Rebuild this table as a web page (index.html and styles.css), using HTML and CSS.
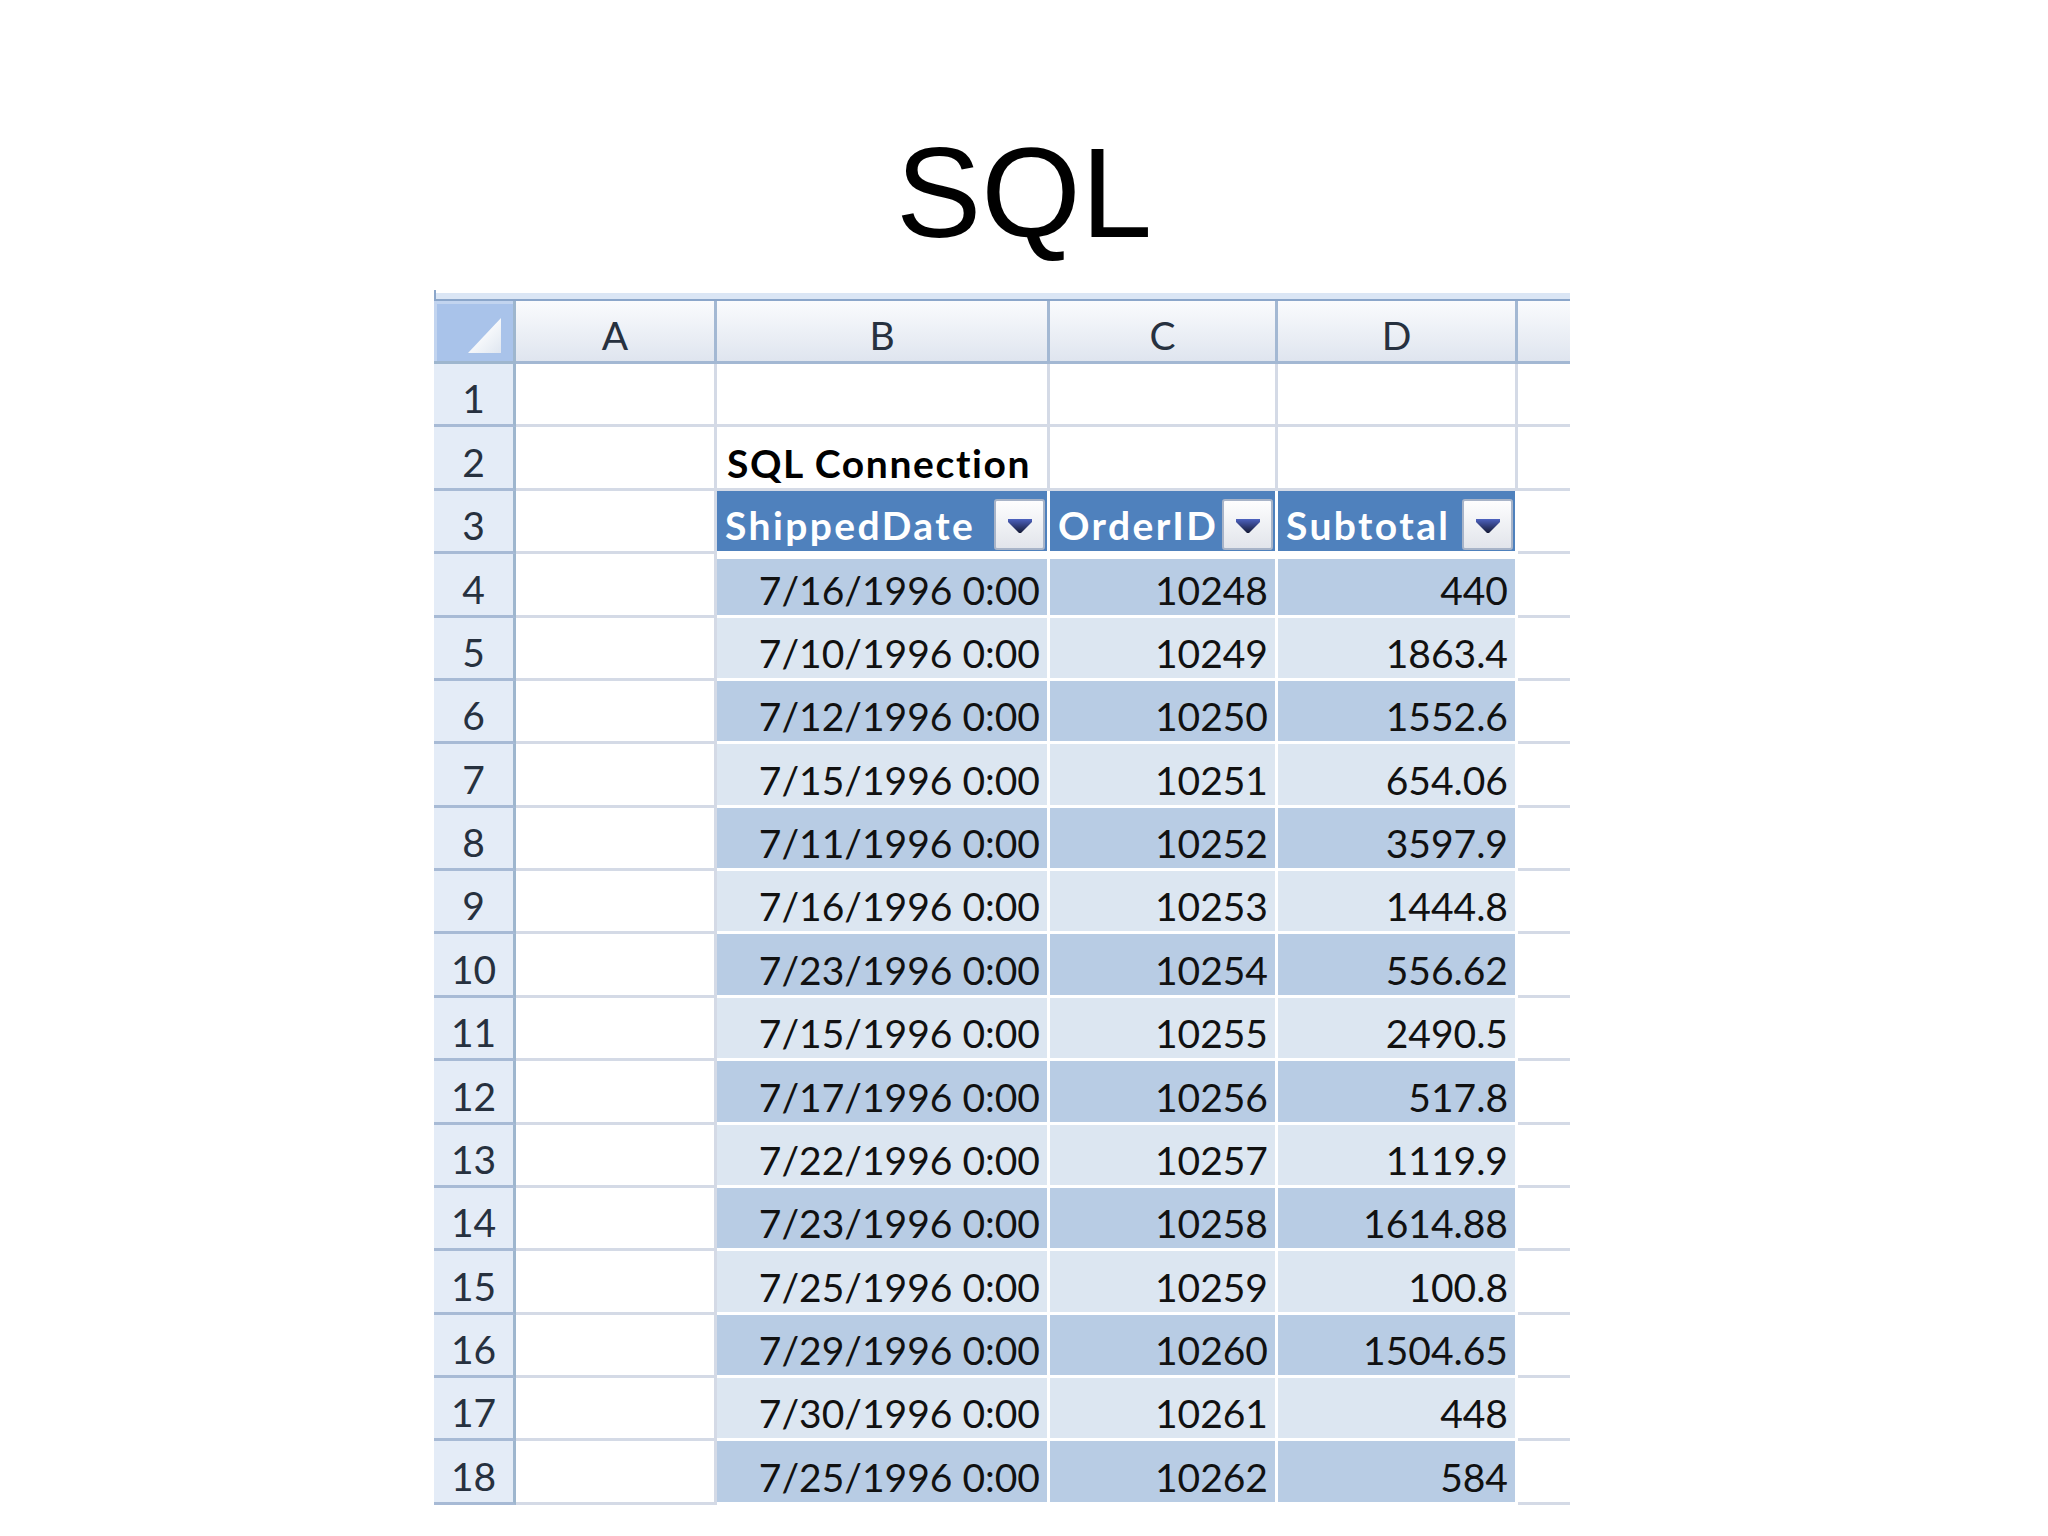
FILE: index.html
```html
<!DOCTYPE html>
<html>
<head>
<meta charset="utf-8">
<title>SQL</title>
<link rel="stylesheet" href="styles.css">
</head>
<body>
<h1 class="title">SQL</h1>
<div class="sheet">
  <div class="tick"></div>
  <div class="topband"></div>
  <div class="grid">
    <div class="corner"><div class="tri"></div></div>
    <div class="hd">A</div><div class="hd">B</div><div class="hd">C</div><div class="hd">D</div><div class="hd last"></div>

    <div class="rh">1</div><div class="c"></div><div class="c"></div><div class="c"></div><div class="c"></div><div class="c last"></div>
    <div class="rh">2</div><div class="c"></div><div class="c title-cell">SQL Connection</div><div class="c"></div><div class="c"></div><div class="c last"></div>
    <div class="rh">3</div><div class="c"></div>
    <div class="th"><span class="th-label">ShippedDate</span><span class="dd"><svg width="24" height="14" viewBox="0 0 24 14"><defs><linearGradient id="g1" x1="0" y1="0" x2="0" y2="1"><stop offset="0" stop-color="#4d62c0"/><stop offset="1" stop-color="#151a36"/></linearGradient></defs><path d="M0 0H24V3L13 14H11L0 3Z" fill="url(#g1)"/></svg></span></div>
    <div class="th"><span class="th-label">OrderID</span><span class="dd"><svg width="24" height="14" viewBox="0 0 24 14"><path d="M0 0H24V3L13 14H11L0 3Z" fill="url(#g1)"/></svg></span></div>
    <div class="th"><span class="th-label">Subtotal</span><span class="dd"><svg width="24" height="14" viewBox="0 0 24 14"><path d="M0 0H24V3L13 14H11L0 3Z" fill="url(#g1)"/></svg></span></div>
    <div class="c last"></div>

    <div class="rh">4</div><div class="c"></div><div class="td odd first">7/16/1996 0:00</div><div class="td odd first">10248</div><div class="td odd first">440</div><div class="c last"></div>
    <div class="rh">5</div><div class="c"></div><div class="td even">7/10/1996 0:00</div><div class="td even">10249</div><div class="td even">1863.4</div><div class="c last"></div>
    <div class="rh">6</div><div class="c"></div><div class="td odd">7/12/1996 0:00</div><div class="td odd">10250</div><div class="td odd">1552.6</div><div class="c last"></div>
    <div class="rh">7</div><div class="c"></div><div class="td even">7/15/1996 0:00</div><div class="td even">10251</div><div class="td even">654.06</div><div class="c last"></div>
    <div class="rh">8</div><div class="c"></div><div class="td odd">7/11/1996 0:00</div><div class="td odd">10252</div><div class="td odd">3597.9</div><div class="c last"></div>
    <div class="rh">9</div><div class="c"></div><div class="td even">7/16/1996 0:00</div><div class="td even">10253</div><div class="td even">1444.8</div><div class="c last"></div>
    <div class="rh">10</div><div class="c"></div><div class="td odd">7/23/1996 0:00</div><div class="td odd">10254</div><div class="td odd">556.62</div><div class="c last"></div>
    <div class="rh">11</div><div class="c"></div><div class="td even">7/15/1996 0:00</div><div class="td even">10255</div><div class="td even">2490.5</div><div class="c last"></div>
    <div class="rh">12</div><div class="c"></div><div class="td odd">7/17/1996 0:00</div><div class="td odd">10256</div><div class="td odd">517.8</div><div class="c last"></div>
    <div class="rh">13</div><div class="c"></div><div class="td even">7/22/1996 0:00</div><div class="td even">10257</div><div class="td even">1119.9</div><div class="c last"></div>
    <div class="rh">14</div><div class="c"></div><div class="td odd">7/23/1996 0:00</div><div class="td odd">10258</div><div class="td odd">1614.88</div><div class="c last"></div>
    <div class="rh">15</div><div class="c"></div><div class="td even">7/25/1996 0:00</div><div class="td even">10259</div><div class="td even">100.8</div><div class="c last"></div>
    <div class="rh">16</div><div class="c"></div><div class="td odd">7/29/1996 0:00</div><div class="td odd">10260</div><div class="td odd">1504.65</div><div class="c last"></div>
    <div class="rh">17</div><div class="c"></div><div class="td even">7/30/1996 0:00</div><div class="td even">10261</div><div class="td even">448</div><div class="c last"></div>
    <div class="rh">18</div><div class="c"></div><div class="td odd">7/25/1996 0:00</div><div class="td odd">10262</div><div class="td odd">584</div><div class="c last"></div>
  </div>
</div>
</body>
</html>
```
FILE: styles.css
```css
html, body {
  margin: 0;
  padding: 0;
  background: #ffffff;
}

.title {
  margin: 129px 0 0 0;
  height: 128px;
  font-family: "Liberation Sans", Arial, sans-serif;
  font-weight: normal;
  font-size: 128px;
  line-height: 128px;
  text-align: center;
  color: #000;
}

.sheet {
  margin: 33px 0 0 434px;
  width: 1136px;
  font-family: Lato, "Open Sans", sans-serif;
  font-size: 39px;
  color: #1a1a1a;
}

.tick {
  width: 2px;
  height: 3px;
  background: #8ba6ca;
}

.topband {
  height: 6px;
  background: #dbe6f5;
  border-left: 2px solid #8ba6ca;
  border-bottom: 2px solid #8ba6ca;
}

.grid {
  display: grid;
  grid-template-columns: 82px 201px 333px 228px 240px 52px;
  grid-template-rows: 63px repeat(18, 63.38px);
}

.grid > div {
  box-sizing: border-box;
  border-right: 3px solid #d4dae6;
  border-bottom: 3px solid #d4dae6;
  display: flex;
  align-items: flex-end;
  white-space: nowrap;
}

.grid > .last {
  border-right: 0;
}

.corner {
  background: #a9c3ea;
  box-shadow: inset 3px 3px 0 #c2d4ef;
  justify-content: flex-end;
  padding: 0 12px 8px 0;
  border-right-color: #9eb6ce !important;
  border-bottom-color: #9eb6ce !important;
}

.tri {
  width: 33px;
  height: 35px;
  background: linear-gradient(135deg, #ffffff 30%, #dfe6f0 100%);
  clip-path: polygon(100% 0, 100% 100%, 0 100%);
}

.hd {
  background: linear-gradient(#fafbfd, #dfe5ef);
  border-right-color: #a3b8d3 !important;
  border-bottom-color: #a3b8d3 !important;
  justify-content: center;
  padding-bottom: 3px;
  color: #27313f;
}

.rh {
  background: #e4ecf7;
  border-right-color: #9eb6ce !important;
  border-bottom-color: #a7bad5 !important;
  justify-content: center;
  padding-bottom: 3px;
  color: #27313f;
}

.c {
  background: #ffffff;
}

.title-cell {
  font-weight: bold;
  color: #000;
  letter-spacing: 1.6px;
  padding: 0 0 2px 10px;
}

.th {
  background: #4f81bd;
  border-right-color: #ffffff !important;
  border-bottom-color: #ffffff !important;
  justify-content: space-between;
  padding: 0 2px 1px 8px;
}

.th-label {
  color: #ffffff;
  font-weight: bold;
  letter-spacing: 2.4px;
  padding-bottom: 2px;
}

.dd {
  box-sizing: border-box;
  width: 51px;
  height: 51px;
  border: 2px solid #a8b4c8;
  border-radius: 3px;
  background: linear-gradient(#fdfdfe, #e2e5eb);
  display: flex;
  align-items: center;
  justify-content: center;
  padding-top: 2px;
}

.td {
  border-right-color: #ffffff !important;
  border-bottom-color: #ffffff !important;
  justify-content: flex-end;
  padding: 0 7px 2px 0;
  color: #111;
}

.odd {
  background: #b8cce4;
}

.even {
  background: #dce6f1;
}

.first {
  box-shadow: inset 0 5px 0 #ffffff;
}
```
